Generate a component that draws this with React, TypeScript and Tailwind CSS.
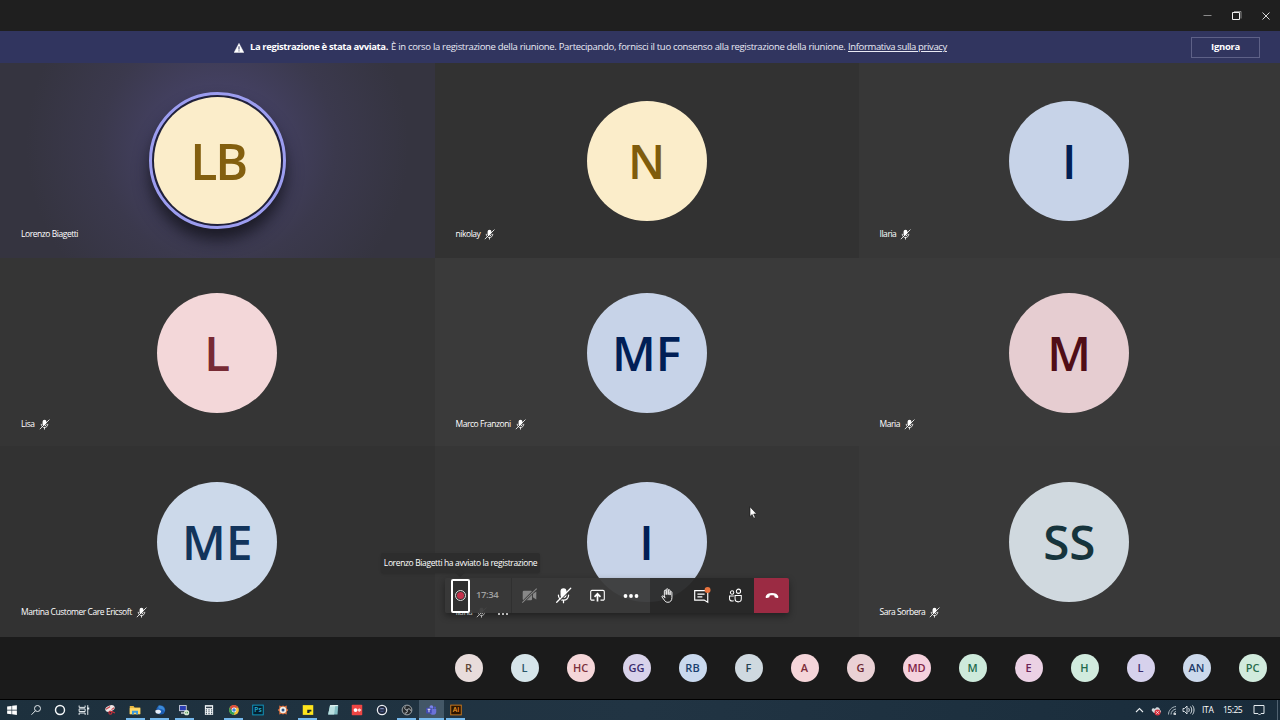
import type { ReactNode } from "react";

const TILES = [
  { initials: "LB", name: "Lorenzo Biagetti", tile: "bg-[radial-gradient(circle_at_50%_42%,#4a4669_0%,#434060_25%,#3b394d_48%,#353440_78%)] pt-[29px] pb-[18px]", avatar: "bg-[#fbedca] text-[#835f0f]", speaking: true },
  { initials: "N", name: "nikolay", tile: "bg-[#323232] pt-[37.5px] pb-[18px]", avatar: "bg-[#fbedca] text-[#7f5c0c]", muted: true },
  { initials: "I", name: "Ilaria", tile: "bg-[#373737] pt-[37.5px] pb-[18px]", avatar: "bg-[#c7d3e8] text-[#011f56]", muted: true },
  { initials: "L", name: "Lisa", tile: "bg-[#353535] pt-[34.5px] pb-4", avatar: "bg-[#f3d7d9] text-[#772a34]", muted: true },
  { initials: "MF", name: "Marco Franzoni", tile: "bg-[#3a3a3a] pt-[34.5px] pb-4", avatar: "bg-[#c7d3e8] text-[#011f56]", muted: true },
  { initials: "M", name: "Maria", tile: "bg-[#3a3a3a] pt-[34.5px] pb-4", avatar: "bg-[#e6cdd1] text-[#500e17]", muted: true },
  { initials: "ME", name: "Martina Customer Care Ericsoft", tile: "bg-[#323232] pt-[36px] pb-[19px]", avatar: "bg-[#ccd9ea] text-[#12345b]", muted: true },
  { initials: "I", name: "Ilaria", tile: "bg-[#363636] pt-[36px] pb-[19px]", avatar: "bg-[#c7d3e8] text-[#011f56]", muted: true, more: true },
  { initials: "SS", name: "Sara Sorbera", tile: "bg-[#393939] pt-[36px] pb-[19px]", avatar: "bg-[#d0d9df] text-[#16343c]", muted: true },
];

const OTHERS = [
  { initials: "R", style: "bg-[#e8dcdb] text-[#5d4535]" },
  { initials: "L", style: "bg-[#d6e5ea] text-[#2a5667]" },
  { initials: "HC", style: "bg-[#f5d6d9] text-[#7c303c]" },
  { initials: "GG", style: "bg-[#d8d2ea] text-[#3a2c6c]" },
  { initials: "RB", style: "bg-[#c9d9ee] text-[#17406d]" },
  { initials: "F", style: "bg-[#cfd9e0] text-[#234252]" },
  { initials: "A", style: "bg-[#f5d5d9] text-[#7b2b38]" },
  { initials: "G", style: "bg-[#ead1d5] text-[#6b2630]" },
  { initials: "MD", style: "bg-[#f5d1dd] text-[#7f2345]" },
  { initials: "M", style: "bg-[#cdeadb] text-[#22694b]" },
  { initials: "E", style: "bg-[#ebd1e4] text-[#6b2358]" },
  { initials: "H", style: "bg-[#d1ebde] text-[#22694b]" },
  { initials: "L", style: "bg-[#d6d1ec] text-[#3a2c6c]" },
  { initials: "AN", style: "bg-[#ccd9ec] text-[#1c3a68]" },
  { initials: "PC", style: "bg-[#d1ebdd] text-[#276b4c]" },
];

const MicOff = ({ className }: { className: string }) => (
  <svg viewBox="0 0 20 20" className={className} fill="none" stroke="currentColor" strokeLinecap="round">
    <rect x="6.5" y="1.5" width="7" height="11.5" rx="3.5" fill="currentColor" stroke="none" />
    <path d="M4 9.5c0 3.400 2.500 6 6 6s6-2.600 6-6M10 15.500v3" strokeWidth="1.500" />
    <path d="M19.500 2.300 3.300 18.500" stroke="#383838" strokeWidth="1.300" />
    <path d="M18.500 1.500 2 18" strokeWidth="1.500" />
  </svg>
);

const Avatar = ({ initials, avatar, speaking }: { initials: string; avatar: string; speaking?: boolean }) =>
  speaking ? (
    <div className="size-[137px] shrink-0 rounded-full border-3 border-[#9c9df0] bg-[#20203a] p-[2px] shadow-[0_11px_16px_rgba(20,20,28,0.85)]">
      <div className={`flex size-full items-center justify-center rounded-full pl-[2px] text-[50px] font-semibold leading-none tracking-[-2px] ${avatar}`}>
        {initials}
      </div>
    </div>
  ) : (
    <div className={`flex size-[120px] shrink-0 items-center justify-center rounded-full text-[47.5px] font-semibold leading-none ${avatar}`}>
      {initials}
    </div>
  );

const TitleBar = () => (
  <div className="flex h-[31px] items-center justify-end bg-[#1f1f1f] pr-[10px] text-[#d8d8d8]">
    <svg viewBox="0 0 70 12" className="h-3 w-[70px]" fill="none" stroke="currentColor">
      <path d="M3.500 5.500h8" stroke="#8a8a8a" />
      <path d="M34 1.500h7v7" stroke="#8a8a8a" />
      <path d="M32.500 2.500h7v7h-7z" stroke="#f0f0f0" />
      <path d="m62.500 2.500 7 7m0-7-7 7" />
    </svg>
  </div>
);

const Banner = () => (
  <div className="flex h-8 items-center bg-[#31355f] pl-[234px] pr-5 pt-px text-[9.500px] text-[#e9eaf5]">
    <svg viewBox="0 0 10 10" className="mr-[6px] size-[10px] shrink-0">
      <path d="M5 .3 9.900 9.500H.1z" fill="#fff" stroke="#fff" strokeWidth=".4" strokeLinejoin="round" />
      <path d="M5 3.300v3.200M5 7.400v1" stroke="#31355f" strokeWidth="1" />
    </svg>
    <span className="w-[141px] whitespace-nowrap font-bold tracking-[-0.400px] text-white">La registrazione è stata avviata.</span>
    <span className="w-[457px] whitespace-nowrap tracking-[-0.310px]">
      È in corso la registrazione della riunione. Partecipando, fornisci il tuo consenso alla registrazione della riunione.
    </span>
    <span className="whitespace-nowrap tracking-[-0.360px] underline">Informativa sulla privacy</span>
    <button className="ml-auto h-[21px] w-[69px] border border-[#5e6187] text-[9.500px] font-bold tracking-[-0.300px] text-white">Ignora</button>
  </div>
);

const Stage = () => (
  <div className="grid h-[574px] grid-cols-[434.5px_424px_421.5px] grid-rows-[195px_188px_191px]">
    {TILES.map((t, i) => (
      <div key={i} className={`flex flex-col items-center justify-between ${t.tile}`}>
        <Avatar initials={t.initials} avatar={t.avatar} speaking={t.speaking} />
        <div className="flex h-[11px] w-full items-center gap-[4px] pl-[21px] text-[8.500px] tracking-[-0.450px] text-white">
          <span>{t.name}</span>
          {t.muted && <MicOff className="size-[11px]" />}
          {t.more && (
            <svg viewBox="0 0 12 2" className="ml-[6px] mt-[3px] h-[2px] w-3" fill="currentColor">
              <path d="M1 0h2v2H1zM5 0h2v2H5zM9 0h2v2H9z" />
            </svg>
          )}
        </div>
      </div>
    ))}
  </div>
);

const Tooltip = () => (
  <div className="absolute left-[381px] top-[553px] flex h-5 w-[159px] items-center justify-center whitespace-nowrap rounded-[2px] bg-[#2d2d2d] text-[8.500px] tracking-[-0.370px] text-white shadow">
    Lorenzo Biagetti ha avviato la registrazione
    <span className="absolute -bottom-[3px] left-[76px] size-[6px] rotate-45 bg-[#2d2d2d]" />
  </div>
);

const ToolButton = ({ children }: { children: ReactNode }) => (
  <span className="flex h-full w-[34.600px] items-center justify-center">{children}</span>
);

const Toolbar = () => (
  <div className="absolute left-[445px] top-[578px] flex h-[35px] w-[344px] overflow-hidden rounded-[2px] text-white shadow-[0_3px_7px_rgba(0,0,0,0.400)]">
    <div className="flex w-[67px] items-center border-r border-[#303030] bg-[#393939]/95 pl-[6px]">
      <span className="flex h-[34px] w-[19px] shrink-0 items-center justify-center rounded-[2px] border-2 border-white bg-[#303030]">
        <span className="size-[11px] shrink-0 rounded-full border border-[#ddd] p-px">
          <span className="block size-full rounded-full bg-[#c4314b]" />
        </span>
      </span>
      <span className="pl-[6px] text-[9.500px] font-semibold tracking-[-0.400px] text-[#a0a0a0]">17:34</span>
    </div>
    <div className="flex w-[138px] bg-[#3a3a3a]/95 pr-[2px]">
      <ToolButton>
        <svg viewBox="0 0 20 20" className="size-[17px] text-[#888]" fill="currentColor">
          <rect x="2" y="4.500" width="11" height="11" rx="1.500" />
          <path d="m14 8 4-2.700v9.400L14 12z" />
          <path d="M19 1 2 18" stroke="#393939" strokeWidth="3" />
          <path d="M18.500 2 1.500 18.500" stroke="currentColor" strokeWidth="1.200" />
        </svg>
      </ToolButton>
      <ToolButton><MicOff className="size-[17px]" /></ToolButton>
      <ToolButton>
        <svg viewBox="0 0 20 20" className="size-[17px]" fill="none" stroke="currentColor" strokeWidth="1.300">
          <path d="M6.500 15.500h-3A1.500 1.500 0 0 1 2 14V5.500A1.500 1.500 0 0 1 3.500 4h13A1.500 1.500 0 0 1 18 5.500V14a1.500 1.500 0 0 1-1.500 1.500h-3" />
          <path d="M10 17V8M6.500 11.500 10 8l3.500 3.500" strokeWidth="2" />
        </svg>
      </ToolButton>
      <ToolButton>
        <svg viewBox="0 0 16 4" className="h-1 w-4" fill="currentColor">
          <circle cx="2.500" cy="2" r="1.900" /><circle cx="8" cy="2" r="1.900" /><circle cx="13.500" cy="2" r="1.900" />
        </svg>
      </ToolButton>
    </div>
    <div className="flex w-[104px] bg-[#282828]/95 pr-[2px]">
      <ToolButton>
        <svg viewBox="0 0 20 20" className="size-[17px]" fill="none" stroke="currentColor" strokeWidth="1.100" strokeLinecap="round" strokeLinejoin="round">
          <path d="M6.300 10V4.800a1.100 1.100 0 0 1 2.200 0V9 3.200a1.100 1.100 0 0 1 2.300 0V9 4.300a1.100 1.100 0 0 1 2.200 0v5.200-3a1.100 1.100 0 0 1 2.200 0v6c0 3.500-2 5.500-4.700 5.500-2 0-3.200-.8-4.200-2.500L3.600 11.800c-.5-1 .4-1.700 1.200-1.200l2 1.700z" />
        </svg>
      </ToolButton>
      <ToolButton>
        <svg viewBox="0 0 20 20" className="size-[18px] overflow-visible" fill="none" stroke="currentColor" strokeWidth="1.300">
          <path d="M3 4h14.500v13L13.500 14.500H3z" />
          <path d="M6 8h8M6 11h5.500" />
          <circle cx="17.300" cy="3.300" r="3.300" fill="#e8733e" stroke="none" />
        </svg>
      </ToolButton>
      <ToolButton>
        <svg viewBox="0 0 20 20" className="size-[17px]" fill="none" stroke="currentColor" strokeWidth="1.200">
          <circle cx="6" cy="6.500" r="2" />
          <circle cx="13.500" cy="5" r="2.500" />
          <path d="M8 10.500H3v3.300C3 15.500 4.300 16.500 6 16.500c.7 0 1.300-.1 1.800-.5" />
          <path d="M9.500 10h7.300v4.200c0 2-1.500 3.300-3.700 3.300s-3.600-1.300-3.600-3.300z" />
        </svg>
      </ToolButton>
    </div>
    <div className="flex w-[35px] items-center justify-center bg-[#9b2b43]">
      <svg viewBox="0 0 16 8" className="h-[7px] w-[14px]" fill="currentColor">
        <path d="M.8 5C1.500 2.300 4.300 1 8 1s6.500 1.300 7.200 4c.2 1.200-.3 2-1.400 1.800l-2-.4c-.7-.2-1-.6-1-1.200V4.300c-1.800-.6-3.800-.6-5.600 0v.9c0 .6-.3 1-1 1.200l-2 .4C1.100 7 .6 6.200.8 5z" />
      </svg>
    </div>
  </div>
);

const Overflow = () => (
  <div className="flex h-[63px] items-center justify-end gap-7 border-b border-black bg-[#1b1b1b] pr-[13.500px]">
    {OTHERS.map((o, i) => (
      <div key={i} className={`flex size-7 items-center justify-center rounded-full text-[11px] font-semibold ${o.style}`}>
        {o.initials}
      </div>
    ))}
  </div>
);

const SYSTEM = [
  <path key="win" d="M1.500 3.300 7.400 2.500v5.200H1.500zM8.200 2.400 14.500 1.500v6.200H8.200zM1.500 8.500h5.900v5.200l-5.900-.8zM8.200 8.500h6.300v6.200l-6.300-.9z" fill="#fff" />,
  <g key="search" fill="none" stroke="#e8eef2" strokeWidth="1.300"><circle cx="10" cy="6" r="4" /><path d="M7.200 9 2 14.300" /></g>,
  <circle key="cortana" cx="8" cy="8" r="6" fill="none" stroke="#f4f7f9" strokeWidth="1.900" />,
  <g key="tasks" fill="none" stroke="#e8eef2" strokeWidth="1.300"><path d="M1.500 2v2.500h8V2M1.500 14.500V12h8v2.500M1.500 6.500h8v3.500h-8zM13 1.500v13" /><path d="M12 6h3" strokeWidth="2.500" /></g>,
];

const APPS: { icon: ReactNode; open?: boolean; active?: boolean }[] = [
  { icon: <><ellipse cx="8" cy="6" rx="6.500" ry="4" transform="rotate(-20 8 6)" fill="#f0e7e7" /><path d="M2.500 7 8 3.500M10 7.500l3.500-2.500" stroke="#c84a50" strokeWidth="1.600" /><circle cx="8.500" cy="11.500" r="2" fill="none" stroke="#c9303b" strokeWidth="1.500" /><path d="m10.500 10 4 2" stroke="#c9303b" strokeWidth="1.500" /></> },
  { icon: <><path d="M1 2.500h5l1.500 2H15v9H1z" fill="#e9b840" /><path d="M1 5.500h14v8H1z" fill="#ffd968" /><path d="M4 9h8v5h-2.500v-2.500h-3V14H4z" fill="#3b9be0" /></>, open: true },
  { icon: <><circle cx="9" cy="8" r="6" fill="#1d5fb4" /><path d="M1.500 9c3-2 6-1.500 8 .5C9 13 5 14 2.500 12z" fill="#e6eef8" /><path d="M6 2c5-1 9 3 8 8-2-3-5-4-8-4z" fill="#3c8bd8" /></>, open: true },
  { icon: <><rect x="1.500" y="1.500" width="10" height="8" fill="#e5e7ef" /><rect x="2.500" y="2.500" width="8" height="6" fill="#2c3fb4" /><path d="M4 11h6v2H4z" fill="#c8ccd5" /><circle cx="11.500" cy="11.500" r="3.500" fill="#dce9d6" /><path d="m9.500 11.500 1.500-1.500v3zm4 0L12 10v3z" fill="#33863c" /></>, open: true },
  { icon: <><rect x="2.500" y="1.500" width="11" height="13" fill="#eff3f5" /><path d="M4 4.500h8" stroke="#31414d" strokeWidth="2" /><path d="M4.500 7v6.500M8 7v6.500M11.500 7v6.500" stroke="#40515f" strokeWidth="1.500" strokeDasharray="1.500 1" /></> },
  { icon: <><circle cx="8" cy="8" r="6.500" fill="#f2c23a" /><path d="M2.400 4.700A6.500 6.500 0 0 0 7.500 14.500L10 9z" fill="#2fa15a" /><path d="M2.400 4.700A6.500 6.500 0 0 1 13.900 5H8L5.500 9z" fill="#dd4b3e" /><circle cx="8" cy="8" r="3.200" fill="#fff" /><circle cx="8" cy="8" r="2.400" fill="#4285d8" /></>, open: true },
  { icon: <><rect x="1" y="1.500" width="14" height="13" fill="#04202f" stroke="#129fc8" strokeWidth="1.200" /><text x="8" y="11.200" textAnchor="middle" fontSize="9" fontWeight="600" fill="#27b6df">Ps</text></> },
  { icon: <><path d="m3 2 3 1 2-1 2 1 3-1 0 4 2 2-2 2 0 4-3-1-2 1-2-1-3 1 0-4-2-2 2-2z" fill="#d86e3c" /><circle cx="8" cy="8" r="4.300" fill="#f2eee8" /><circle cx="8" cy="8" r="2" fill="#27538b" /></> },
  { icon: <><path d="M1 1.500h14v13H1z" fill="#ffe51c" /><path d="M7 12V7.500h5.500V10H10v2z" fill="#17242d" /></>, open: true },
  { icon: <><path d="m4 2 11-.5-1 12.500H1.500z" fill="#84bfc4" /><path d="m4 2 7-.5L9.500 14h-8z" fill="#b9dfe0" /><path d="M4 2.500 14.500 2" stroke="#e9f7f5" strokeWidth="1.500" /></> },
  { icon: <><rect x="1" y="1" width="14" height="14" rx="1" fill="#ee4543" /><circle cx="6" cy="8" r="2.500" fill="#fff" /><path d="m8 8 3-2.500L14 8l-3 2.500z" fill="#fbd1cf" /></> },
  { icon: <><circle cx="8" cy="8" r="7" fill="#eef0f4" /><circle cx="8" cy="8" r="5.300" fill="#20293e" /><path d="M4.500 7a4 3 0 0 1 7 0z" fill="#8798c7" /><path d="M4.500 9a4 3 0 0 0 7 0z" fill="#46558a" /></> },
  { icon: <><circle cx="8" cy="8" r="6.500" fill="#25292c" stroke="#c9cdd0" /><path d="M8 8c-3 0-4-3-2-4.500M8 8c1.500-2.500 5-1.500 5 1M8 8c1.500 2.500-1 5-3 4" fill="none" stroke="#c9cdd0" strokeWidth="1.300" /></>, open: true },
  { icon: <><circle cx="8.500" cy="4" r="2.500" fill="#7b83eb" /><circle cx="13" cy="5" r="1.700" fill="#5059c9" /><path d="M6 6.500h9v4c0 5-8 5-8.500 1z" fill="#6b72d8" /><rect x="1.500" y="5" width="7.500" height="7.500" rx=".8" fill="#444cb5" /><path d="M3.500 7h3.700M5.300 7v4" stroke="#fff" strokeWidth="1.100" /></>, open: true, active: true },
  { icon: <><rect x="1" y="1.500" width="14" height="13" fill="#2c1500" stroke="#d57e1c" strokeWidth="1.200" /><text x="8" y="11.200" textAnchor="middle" fontSize="9" fontWeight="600" fill="#f49a2a">Ai</text></>, open: true },
];

const Taskbar = () => (
  <div className="flex h-5 items-center bg-[linear-gradient(90deg,#1d303d,#213443_50%,#192c3b)] text-white">
    {SYSTEM.map((s, i) => (
      <span key={i} className="flex w-6 justify-center">
        <svg viewBox="0 0 16 16" className="size-3">{s}</svg>
      </span>
    ))}
    <div className="ml-[2px] flex h-full">
      {APPS.map((a, i) => (
        <span key={i} className={`flex h-full w-[24.700px] flex-col items-center justify-between pt-1 ${a.active ? "bg-[#435767]" : ""}`}>
          <svg viewBox="0 0 16 16" className="size-3">{a.icon}</svg>
          {a.open && <span className={`h-[2px] bg-[#76b9ed] ${a.active ? "w-full" : "w-[19px]"}`} />}
        </span>
      ))}
    </div>
    <div className="ml-auto flex h-full items-center text-[8.500px] tracking-[-0.300px]">
      <svg viewBox="0 0 60 16" className="mr-[7px] h-4 w-[60px]" fill="none" stroke="#e8edf0">
        <path d="m1 10 3.500-3.500L8 10" strokeWidth="1.100" />
        <path d="M18 10c-3-2 0-5 2-3 1-3 5-2 5 1 2 1 1 3-1 3h-5z" fill="#d3d9dc" stroke="none" />
        <circle cx="22.500" cy="10.500" r="3" fill="#d9303d" stroke="none" />
        <path d="m21.300 9.300 2.400 2.400m0-2.400-2.400 2.400" strokeWidth=".9" />
        <path d="M33.500 12.500c0-4 3-7.500 7.500-8M36 12.500c0-3 2-5 5-5.500M38.500 12.500c0-1.500 1-2.700 2.500-3" stroke="#a9b5bd" />
        <circle cx="40" cy="12" r="1" fill="#fff" stroke="none" />
        <path d="M48 6.500h1.500l2.500-2.500v8l-2.500-2.500H48zM53.500 6c1 1 1 3 0 4M55.500 4.500c1.700 2 1.700 5 0 7M57.500 3.500c2 2.500 2 6.500 0 9" strokeWidth=".9" />
      </svg>
      <span className="w-[21px]">ITA</span>
      <span className="w-[30px] tracking-[-0.500px]">15:25</span>
      <svg viewBox="0 0 12 12" className="size-3" fill="none" stroke="#e4eaee">
        <path d="M1 1.500h10v8H8L6.500 11 5 9.500H1z" />
      </svg>
      <span className="ml-[12px] h-full w-[3px] border-l border-[#506271]" />
    </div>
  </div>
);

export default function App() {
  return (
    <div className="relative h-[720px] w-[1280px] overflow-hidden bg-[#1f1f1f] font-['Open_Sans','Noto_Sans',sans-serif]">
      <TitleBar />
      <Banner />
      <Stage />
      <Overflow />
      <Taskbar />
      <Tooltip />
      <Toolbar />
      <svg viewBox="0 0 9 13" className="absolute left-[749px] top-[506px] h-[13px] w-[9px]">
        <path d="M1 .8v9.700l2.200-2 1.500 3.700 1.600-.7-1.600-3.500h3z" fill="#fff" stroke="#111" strokeWidth=".6" />
      </svg>
    </div>
  );
}
